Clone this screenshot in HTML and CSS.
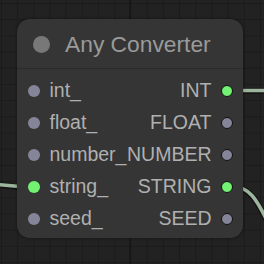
FILE: index.html
```html
<!DOCTYPE html>
<html>
<head>
    <title>Any Converter</title>
    <link rel="stylesheet" href="styles.css">
</head>
<body>
    <svg class="wires" width="264" height="264" viewBox="0 0 264 264">
        <g class="wire-shadow">
            <path d="M 236 91 L 270 91"/>
            <path d="M -4 185 L 20 187"/>
            <path d="M 232 187 C 248 187, 256 196, 272 232"/>
        </g>
        <g class="wire">
            <path d="M 236 90.5 L 270 90.5"/>
            <path d="M -4 184.5 L 20 186.5"/>
            <path d="M 232 186.5 C 248 186.5, 256 195.5, 272 231.5"/>
        </g>
    </svg>

    <div class="node">
        <div class="node-title">
            <span class="title-dot"></span>
            <span class="title-text">Any Converter</span>
        </div>
        <div class="node-body">
            <div class="slot-row">
                <span class="dot in"></span><span class="label">int_</span>
                <span class="label out-label">INT</span><span class="dot out on"></span>
            </div>
            <div class="slot-row">
                <span class="dot in"></span><span class="label">float_</span>
                <span class="label out-label">FLOAT</span><span class="dot out"></span>
            </div>
            <div class="slot-row">
                <span class="dot in"></span><span class="label">number_</span>
                <span class="label out-label">NUMBER</span><span class="dot out"></span>
            </div>
            <div class="slot-row">
                <span class="dot in on"></span><span class="label">string_</span>
                <span class="label out-label">STRING</span><span class="dot out on"></span>
            </div>
            <div class="slot-row">
                <span class="dot in"></span><span class="label">seed_</span>
                <span class="label out-label">SEED</span><span class="dot out"></span>
            </div>
        </div>
    </div>
</body>
</html>
```

FILE: styles.css
```css
body {
    margin: 0;
    width: 264px;
    height: 264px;
    overflow: hidden;
    position: relative;
    font-family: 'Liberation Sans', Arial, sans-serif;
    background-color: #222222;
    background-image:
        linear-gradient(90deg, transparent 129px, #181818 129px, #181818 131px, transparent 131px),
        linear-gradient(90deg, #1b1b1b 1px, transparent 1px),
        linear-gradient(#1b1b1b 1px, transparent 1px);
    background-size: 264px 264px, 16.2px 16.2px, 16.2px 16.2px;
    background-position: 0 0, 1px 0, 0 3px;
    background-repeat: no-repeat, repeat, repeat;
}
.wires {
    position: absolute;
    left: 0;
    top: 0;
    z-index: 0;
}
.wires path {
    fill: none;
}
.wire-shadow path {
    stroke: #141414;
    stroke-width: 6;
}
.wire path {
    stroke: #9db59d;
    stroke-width: 3.5;
}
.node {
    position: relative;
    z-index: 1;
    margin: 19px 0 0 17px;
    width: 226px;
    height: 219px;
    background: #353535;
    border-radius: 13px;
    box-shadow: 0 0 3px rgba(0, 0, 0, 0.5);
    display: flex;
    flex-direction: column;
}
.node-title {
    height: 49px;
    border-bottom: 1px solid #2b2b2b;
    display: flex;
    align-items: center;
    padding-left: 16px;
    gap: 15px;
}
.title-dot {
    width: 17px;
    height: 17px;
    border-radius: 50%;
    background: #787878;
    margin-top: 1px;
}
.title-text {
    font-size: 22.8px;
    color: #9a9a9a;
    margin-top: 1px;
}
.node-body {
    padding: 6px 10px 0 10.5px;
    display: flex;
    flex-direction: column;
}
.slot-row {
    height: 32px;
    display: flex;
    align-items: center;
}
.label {
    font-size: 19.5px;
    color: #b0b0b0;
    line-height: 1;
}
.out-label {
    margin-left: auto;
}
.dot {
    border-radius: 50%;
    background: #858599;
    flex: none;
}
.dot.in {
    width: 12px;
    height: 12px;
    margin-right: 10px;
}
.dot.out {
    width: 10.5px;
    height: 10.5px;
    border: 1.5px solid #111;
    margin-left: 9px;
}
.dot.on {
    background: #72f172;
}
```
